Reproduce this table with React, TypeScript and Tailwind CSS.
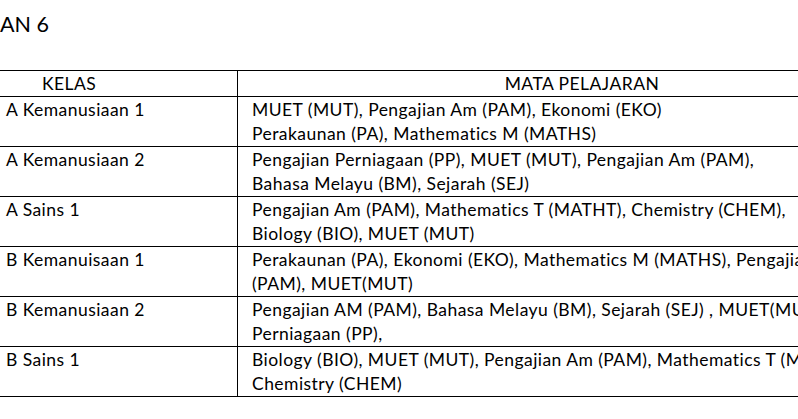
import React from "react";

const rows: { kelas: string; lines: string[] }[] = [
  {
    kelas: "A Kemanusiaan 1",
    lines: ["MUET (MUT), Pengajian Am (PAM), Ekonomi (EKO)", "Perakaunan (PA), Mathematics M (MATHS)"],
  },
  {
    kelas: "A Kemanusiaan 2",
    lines: ["Pengajian Perniagaan (PP), MUET (MUT), Pengajian Am (PAM),", "Bahasa Melayu (BM), Sejarah (SEJ)"],
  },
  {
    kelas: "A Sains 1",
    lines: ["Pengajian Am (PAM), Mathematics T (MATHT), Chemistry (CHEM),", "Biology (BIO), MUET (MUT)"],
  },
  {
    kelas: "B Kemanuisaan 1",
    lines: ["Perakaunan (PA), Ekonomi (EKO), Mathematics M (MATHS), Pengajian Am", "(PAM), MUET(MUT)"],
  },
  {
    kelas: "B Kemanusiaan 2",
    lines: ["Pengajian AM (PAM), Bahasa Melayu (BM), Sejarah (SEJ) , MUET(MUT), Pengajian", "Perniagaan (PP),"],
  },
  {
    kelas: "B Sains 1",
    lines: ["Biology (BIO), MUET (MUT), Pengajian Am (PAM), Mathematics T (MATHT),", "Chemistry (CHEM)"],
  },
];

export default function App() {
  return (
    <div
      className="w-[798px] h-[419px] overflow-hidden bg-white text-black [font-variant-ligatures:none]"
      style={{ fontFamily: "Lato, 'Liberation Sans', sans-serif" }}
    >
      <div className="h-[70px] pt-[9px] text-[21.5px] leading-[30px] whitespace-nowrap">AN 6</div>
      <div className="flex flex-col w-max border-t border-black text-[17.5px] leading-[24px] tracking-[0.45px]">
        <div className="flex border-b border-black">
          <div className="w-[238px] shrink-0 border-r border-black pl-[42px] pt-[1px] h-[25px]">KELAS</div>
          <div className="w-[688px] shrink-0 text-center pt-[1px] h-[25px]">MATA PELAJARAN</div>
        </div>
        {rows.map((r) => (
          <div key={r.kelas} className="flex border-b border-black">
            <div className="w-[238px] shrink-0 border-r border-black pl-[6px] pt-[1px] h-[49px] whitespace-nowrap">
              {r.kelas}
            </div>
            <div className="w-[688px] shrink-0 pl-[14px] pt-[1px] h-[49px] whitespace-nowrap">
              {r.lines.map((l, i) => (
                <div key={i}>{l}</div>
              ))}
            </div>
          </div>
        ))}
      </div>
    </div>
  );
}
